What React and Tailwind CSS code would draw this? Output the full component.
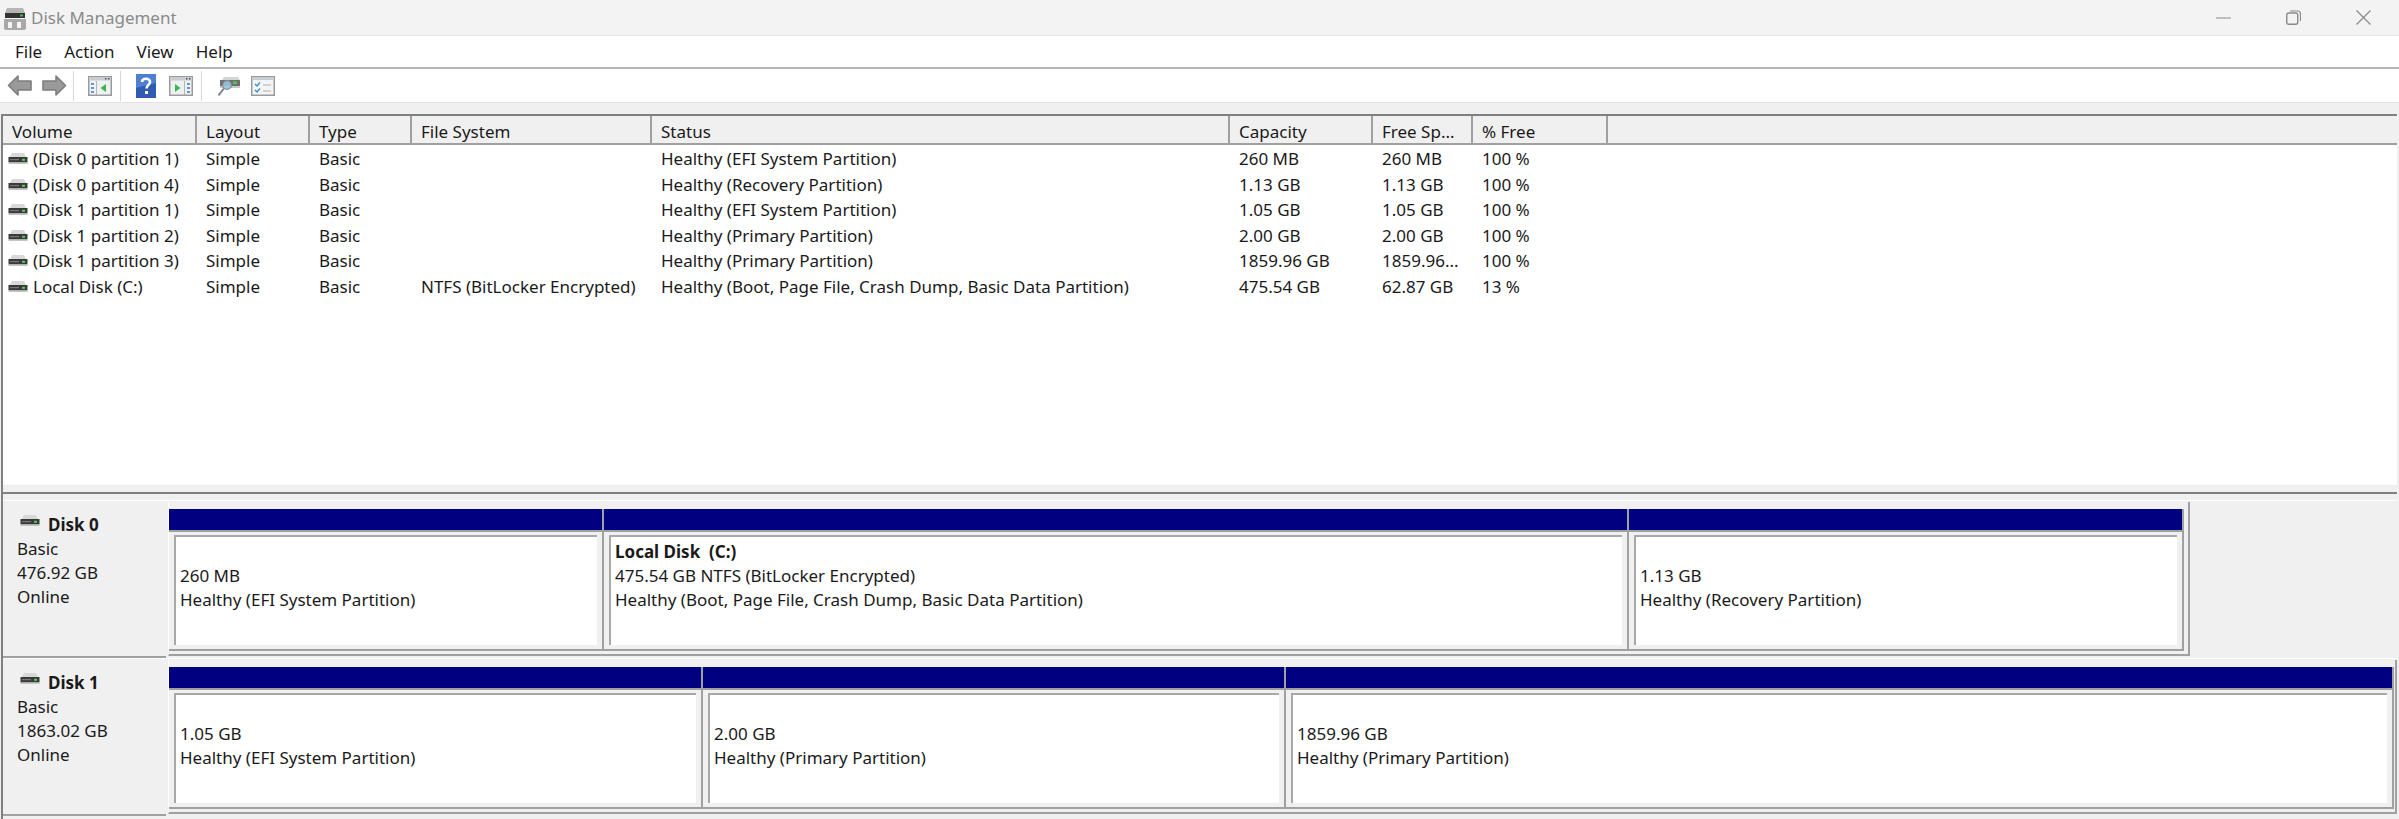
const columns = [
  { name: 'Volume', width: 'w-[194px]' },
  { name: 'Layout', width: 'w-[113px]' },
  { name: 'Type', width: 'w-[102px]' },
  { name: 'File System', width: 'w-[240px]' },
  { name: 'Status', width: 'w-[578px]' },
  { name: 'Capacity', width: 'w-[143px]' },
  { name: 'Free Sp...', width: 'w-[100px]' },
  { name: '% Free', width: 'w-[135px]' },
];

const volumes = [
  ['(Disk 0 partition 1)', 'Simple', 'Basic', '', 'Healthy (EFI System Partition)', '260 MB', '260 MB', '100 %'],
  ['(Disk 0 partition 4)', 'Simple', 'Basic', '', 'Healthy (Recovery Partition)', '1.13 GB', '1.13 GB', '100 %'],
  ['(Disk 1 partition 1)', 'Simple', 'Basic', '', 'Healthy (EFI System Partition)', '1.05 GB', '1.05 GB', '100 %'],
  ['(Disk 1 partition 2)', 'Simple', 'Basic', '', 'Healthy (Primary Partition)', '2.00 GB', '2.00 GB', '100 %'],
  ['(Disk 1 partition 3)', 'Simple', 'Basic', '', 'Healthy (Primary Partition)', '1859.96 GB', '1859.96...', '100 %'],
  ['Local Disk (C:)', 'Simple', 'Basic', 'NTFS (BitLocker Encrypted)', 'Healthy (Boot, Page File, Crash Dump, Basic Data Partition)', '475.54 GB', '62.87 GB', '13 %'],
];

const disks = [
  {
    name: 'Disk 0', size: '476.92 GB', frame: 'w-[2022px] pr-[4px]',
    parts: [
      { width: 'w-[435px]', lines: ['260 MB', 'Healthy (EFI System Partition)'] },
      { width: 'w-[1025px]', title: 'Local Disk  (C:)', lines: ['475.54 GB NTFS (BitLocker Encrypted)', 'Healthy (Boot, Page File, Crash Dump, Basic Data Partition)'] },
      { width: 'w-[555px]', lines: ['1.13 GB', 'Healthy (Recovery Partition)'] },
    ],
  },
  {
    name: 'Disk 1', size: '1863.02 GB', frame: 'w-[2229px] pr-[1px]',
    parts: [
      { width: 'w-[534px]', lines: ['1.05 GB', 'Healthy (EFI System Partition)'] },
      { width: 'w-[583px]', lines: ['2.00 GB', 'Healthy (Primary Partition)'] },
      { width: 'w-[1108px]', lines: ['1859.96 GB', 'Healthy (Primary Partition)'] },
    ],
  },
];

function DriveIcon({ className }) {
  return (
    <svg viewBox="0 0 20 13" className={className}>
      <path d="M2 5 L4 1 H16 L18 5 Z" fill="#d8d8d8" />
      <rect x="0.5" y="5" width="19" height="5.5" fill="#3a3a3a" />
      <rect x="0.5" y="10.5" width="19" height="1.5" fill="#c4c4c4" />
      <rect x="14" y="6.8" width="3" height="2" fill="#4fd04f" />
      <rect x="2" y="7" width="9" height="1.2" fill="#777" />
    </svg>
  );
}

function AppIcon() {
  return (
    <svg viewBox="0 0 24 24" className="w-[24px] h-[24px]">
      <path d="M5 2 H21 L23 7 H3 Z" fill="#b5b5b5" />
      <rect x="3" y="7" width="20" height="5" fill="#333" />
      <rect x="18" y="8.5" width="3" height="2" fill="#38c838" />
      <path d="M2 13 H24 V22 Q24 24 22 24 H4 Q2 24 2 22 Z" fill="#a8a8a8" />
      <rect x="6" y="16" width="4" height="6" fill="#f3f3f3" />
      <rect x="15" y="16" width="4" height="6" fill="#f3f3f3" />
    </svg>
  );
}

function ArrowIcon({ flip }) {
  return (
    <svg viewBox="0 0 25 23" className={flip ? 'w-[25px] h-[23px] -scale-x-100' : 'w-[25px] h-[23px]'}>
      <path d="M1.5 11.5 L11 2 V7 H24 V16 H11 V21 Z" fill="#9a9a9a" stroke="#7d7d7d" strokeWidth="1.6" strokeLinejoin="round" />
    </svg>
  );
}

function PanelIcon({ right }) {
  return (
    <svg viewBox="0 0 24 20" className="w-[24px] h-[20px]">
      <rect x="0.75" y="0.75" width="22.5" height="18.5" fill="#eef1f4" stroke="#9a9a9a" strokeWidth="1.5" />
      <rect x="1" y="1" width="22" height="3.5" fill="#c9ccd0" />
      <rect x="17" y="2" width="1.5" height="1.5" fill="#555" />
      <rect x="20" y="2" width="1.5" height="1.5" fill="#555" />
      <path d={right ? 'M15.5 5 V19' : 'M8.5 5 V19'} stroke="#b5b5b5" strokeWidth="1" />
      {right ? (
        <>
          <path d="M6 8 L11.5 12 L6 16 Z" fill="#39b54a" />
          <rect x="18" y="7" width="3" height="2" fill="#6d96c8" />
          <rect x="18" y="11" width="3" height="2" fill="#6d96c8" />
          <rect x="18" y="15" width="3" height="2" fill="#6d96c8" />
        </>
      ) : (
        <>
          <path d="M18 8 L12.5 12 L18 16 Z" fill="#39b54a" />
          <rect x="3" y="7" width="3" height="2" fill="#6d96c8" />
          <rect x="3" y="11" width="3" height="2" fill="#6d96c8" />
          <rect x="3" y="15" width="3" height="2" fill="#6d96c8" />
        </>
      )}
    </svg>
  );
}

function HelpIcon() {
  return (
    <svg viewBox="0 0 20 24" className="w-[20px] h-[24px]">
      <rect width="20" height="24" fill="#2f5cb0" />
      <path d="M0 0 H20 V9 L0 14 Z" fill="#4f7fd0" />
      <path d="M6 8 C6 4 14 3.5 14 8 C14 11 10.5 11 10.5 14.5" fill="none" stroke="#fff" strokeWidth="2.6" />
      <rect x="9" y="17" width="3" height="3" fill="#fff" />
    </svg>
  );
}

function ProbeIcon() {
  return (
    <svg viewBox="0 0 24 24" className="w-[24px] h-[24px]">
      <path d="M5 6 L7 3 H21 L23 6 Z" fill="#d4d4d4" />
      <rect x="3" y="6" width="20" height="6" fill="#6f6f6f" />
      <rect x="16" y="7.5" width="4" height="2.5" fill="#45d045" />
      <rect x="3" y="12" width="20" height="2" fill="#c8c8c8" />
      <circle cx="10" cy="11" r="4.4" fill="#9cc8e0" fillOpacity="0.85" stroke="#7b8a94" strokeWidth="1.2" />
      <path d="M6.8 14.5 L1.5 21.5" stroke="#808080" strokeWidth="2" />
    </svg>
  );
}

function ChecklistIcon() {
  return (
    <svg viewBox="0 0 24 20" className="w-[24px] h-[20px]">
      <rect x="0.75" y="0.75" width="22.5" height="18.5" fill="#f4f5f6" stroke="#9a9a9a" strokeWidth="1.5" />
      <rect x="1" y="1" width="22" height="3" fill="#c9ccd0" />
      <path d="M4 8 L6 10 L9 6.5 M4 14 L6 16 L9 12.5" fill="none" stroke="#3f8fd8" strokeWidth="1.5" />
      <path d="M12 9 H20 M12 15 H20" stroke="#b0b0b0" strokeWidth="1.2" />
    </svg>
  );
}

function Separator() {
  return <div className="w-px h-[30px] bg-[#d6d6d6]" />;
}

function Partition({ part }) {
  return (
    <div className={`${part.width} h-full shrink-0 flex flex-col border-r-2 border-b-2 border-[#a0a0a0]`}>
      <div className="h-[21px] bg-[#000080] shrink-0" />
      <div className="h-[2px] bg-[#a0a0a0] shrink-0" />
      <div className="flex-1 pt-[3px] pl-[5px] pr-[5px] pb-[4px] bg-[#f0f0f0] flex">
        <div className="flex-1 bg-white border-t-2 border-l-2 border-[#a8a8a8] pl-[4px] pt-[3px] leading-[24px]">
          <div className="font-bold h-[24px] whitespace-pre">{part.title}</div>
          {part.lines.map((line) => (
            <div key={line} className="whitespace-pre">{line}</div>
          ))}
        </div>
      </div>
    </div>
  );
}

function DiskRow({ disk }) {
  return (
    <div className="h-[158px] flex border-t border-white shrink-0">
      <div className="w-[163px] h-full border-b-2 border-[#a0a0a0] pl-[14px] pt-[12px] leading-[24px]">
        <div className="flex items-start font-bold h-[24px]">
          <DriveIcon className="w-[20px] h-[13px] ml-[3px] mr-[8px] mt-[1px]" />
          <span>{disk.name}</span>
        </div>
        <div>Basic</div>
        <div>{disk.size}</div>
        <div>Online</div>
      </div>
      <div className={`${disk.frame} h-[154px] ml-[2px] mt-[1px] shrink-0 border-r-2 border-b-2 border-l border-[#a0a0a0] border-l-white pt-[7px] pb-[3px] flex`}>
        {disk.parts.map((part) => (
          <Partition key={part.lines[0]} part={part} />
        ))}
      </div>
    </div>
  );
}

export default function App() {
  return (
    <div className="w-[2399px] h-[819px] overflow-hidden bg-[#f0f0f0] flex flex-col text-[17px] text-[#1a1a1a] font-['Noto_Sans',sans-serif]">
      {/* title bar */}
      <div className="h-[36px] flex items-center bg-[#f3f3f3] pl-[2px] shrink-0 border-b border-[#e6e6e6]">
        <AppIcon />
        <span className="ml-[5px] text-[#8a8a8a]">Disk Management</span>
        <div className="ml-auto flex items-center mr-[28px] gap-[55px] text-[#8a8a8a]">
          <svg viewBox="0 0 15 15" className="w-[15px] h-[15px]"><path d="M0 8 H15" stroke="currentColor" strokeWidth="1" /></svg>
          <svg viewBox="0 0 15 15" className="w-[15px] h-[15px]">
            <rect x="0.75" y="3" width="11" height="11.25" rx="2" fill="none" stroke="currentColor" strokeWidth="1.4" />
            <path d="M4 1 H12 Q14.5 1 14.5 3.5 V11" fill="none" stroke="currentColor" strokeWidth="1.2" />
          </svg>
          <svg viewBox="0 0 15 15" className="w-[15px] h-[15px]"><path d="M0.5 0.5 L14.5 14.5 M14.5 0.5 L0.5 14.5" stroke="currentColor" strokeWidth="1.2" /></svg>
        </div>
      </div>

      {/* menu */}
      <div className="h-[33px] bg-white flex items-center pl-[15px] gap-[22px] border-b-2 border-[#b4b4b4] shrink-0">
        <span>File</span>
        <span>Action</span>
        <span>View</span>
        <span>Help</span>
      </div>

      {/* toolbar */}
      <div className="h-[34px] bg-white flex items-center pl-[7px] border-b border-[#e2e2e2] shrink-0">
        <ArrowIcon />
        <div className="w-[10px]" />
        <ArrowIcon flip />
        <div className="w-[6px]" />
        <Separator />
        <div className="w-[14px]" />
        <PanelIcon />
        <div className="w-[8px]" />
        <Separator />
        <div className="w-[15px]" />
        <HelpIcon />
        <div className="w-[13px]" />
        <PanelIcon right />
        <div className="w-[8px]" />
        <Separator />
        <div className="w-[15px]" />
        <ProbeIcon />
        <div className="w-[10px]" />
        <ChecklistIcon />
      </div>

      <div className="h-[11px] shrink-0" />

      {/* volume list */}
      <div className="h-[378px] shrink-0 ml-[1px] mr-[2px] border-l-2 border-t-2 border-[#808080] bg-white flex flex-col">
        <div className="h-[29px] flex bg-[#f0f0f0] border-b-2 border-[#a0a0a0] shrink-0 leading-[31px]">
          {columns.map((col) => (
            <div key={col.name} className={`${col.width} pl-[9px] border-r-2 border-[#a0a0a0]`}>{col.name}</div>
          ))}
        </div>
        <div className="flex-1 pt-[1px]">
          {volumes.map((row) => (
            <div key={row[0]} className="h-[25.5px] flex items-center leading-[25px]">
              {row.map((cell, i) => (
                <div key={i} className={`${columns[i].width} shrink-0 whitespace-nowrap ${i === 0 ? 'flex items-center pl-[5px]' : 'pl-[9px]'}`}>
                  {i === 0 && <DriveIcon className="w-[20px] h-[13px] mr-[5px]" />}
                  {cell}
                </div>
              ))}
            </div>
          ))}
        </div>
        <div className="h-[8px] bg-[#f0f0f0] border-t border-[#fafafa] shrink-0" />
      </div>
      <div className="h-[2px] ml-[1px] mr-[2px] bg-[#808080] shrink-0" />

      {/* graphical view */}
      <div className="flex-1 ml-[1px] mr-[2px] border-l-2 border-[#808080] pt-[6px] flex flex-col">
        {disks.map((disk) => (
          <DiskRow key={disk.name} disk={disk} />
        ))}
      </div>
    </div>
  );
}
